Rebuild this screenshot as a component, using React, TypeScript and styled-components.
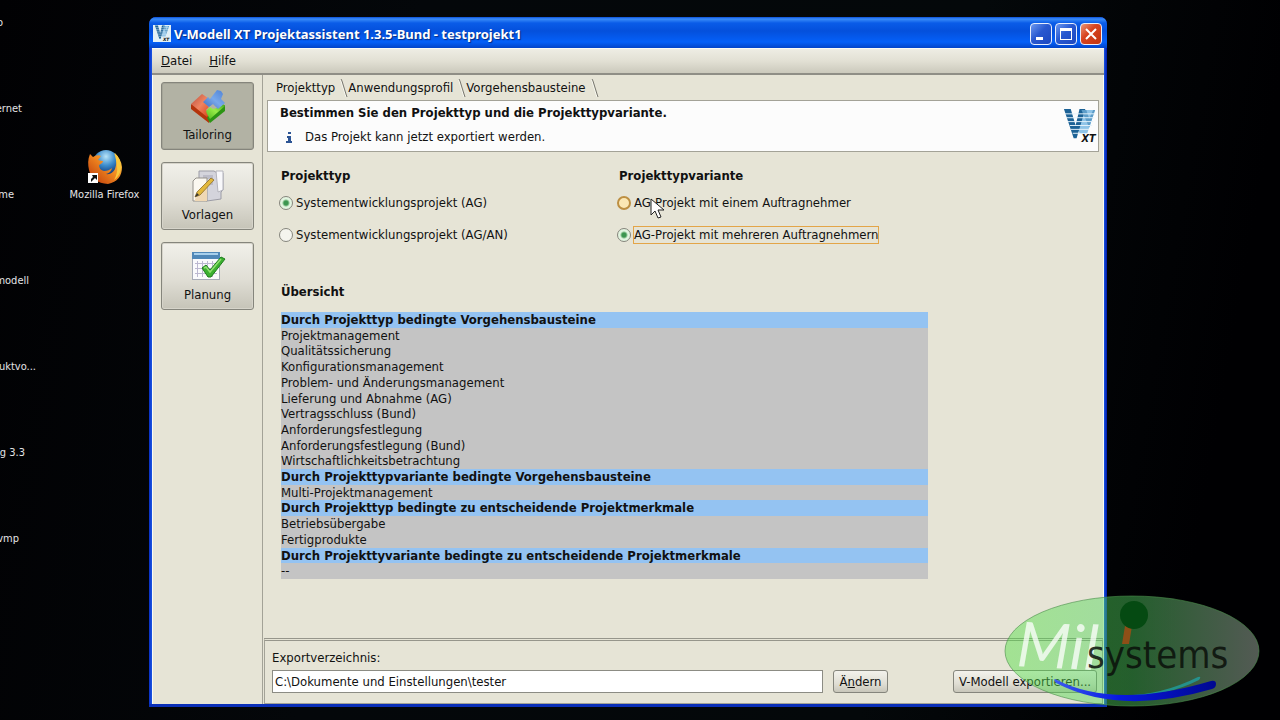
import React from 'react';
import styled, { createGlobalStyle } from 'styled-components';

const UI_FONT = '"DejaVu Sans Condensed", "DejaVu Sans", "Noto Sans", sans-serif';
const BG = '#e6e4d6';
const LINE = '#a3a297';

const GlobalStyle = createGlobalStyle`
  *, *::before, *::after { box-sizing: border-box; }
  body { margin: 0; background: #020305; font-family: ${UI_FONT}; font-size: 13px; color: #111; }
  button, input { font: inherit; color: inherit; }
  h1, h2, p, ul { margin: 0; padding: 0; }
`;

const Desktop = styled.div`
  position: relative;
  display: grid;
  grid-template-columns: 149px minmax(0, 1fr) 173px;
  min-height: 100vh;
  overflow: hidden;
  background: linear-gradient(100deg, #010103 0%, #04070a 30%, #04080a 70%, #000002 92%);
`;

const Shortcuts = styled.div`
  display: grid;
  grid-template-columns: 60px 89px;
  grid-template-rows: 30px;
  grid-auto-rows: 86px;
  align-items: end;
  font-size: 11px;
  line-height: 14px;
  color: #e4e4e6;
`;

const CutLabel = styled.span<{ $width: number }>`
  grid-column: 1;
  display: flex;
  justify-content: flex-end;
  width: ${p => p.$width}px;
  white-space: nowrap;
`;

const Shortcut = styled.div`
  grid-column: 2;
  grid-row: 3;
  display: flex;
  flex-direction: column;
  align-items: center;
  gap: 3px;
  white-space: nowrap;
`;

const Window = styled.section`
  display: flex;
  flex-direction: column;
  margin: 17px 0 13px;
  padding: 0 3px 3px;
  border-radius: 7px 7px 0 0;
  background: linear-gradient(90deg, #0a2fc4 0, #1a56e4 3px, #1a56e4 calc(100% - 3px), #0018a8 100%);
  box-shadow: inset 0 -3px 0 #0a2fb8;
  overflow: hidden;
`;

const TitleBar = styled.header`
  display: flex;
  align-items: center;
  gap: 3px;
  height: 31px;
  margin: 0 -3px;
  padding: 2px 5px 0 4px;
  background: linear-gradient(#0a4fd8 0, #3a8cf8 2px, #0a5ce8 6px, #0450dc 14px, #0460f8 25px, #0244c8 31px);
`;

const WindowIcon = styled.span`
  display: flex;
  width: 18px;
  height: 17px;
  padding: 0 1px;
  background: #e2f0f6;
`;

const TitleText = styled.h1`
  flex: 1;
  font-family: "Noto Sans", sans-serif;
  font-size: 13px;
  font-weight: 700;
  line-height: 20px;
  color: #fff;
  text-shadow: 1px 1px 1px #062a80;
  white-space: nowrap;
`;

const CaptionButton = styled.button<{ $close?: boolean }>`
  width: 22px;
  height: 22px;
  padding: 0;
  border: 1px solid #e8eefc;
  border-radius: 4px;
  background: ${p => p.$close
    ? 'linear-gradient(135deg, #ec9878, #d84420 40%, #c03410)'
    : 'linear-gradient(135deg, #6c98f0, #2858d0 45%, #1c48c0)'};
  svg { display: block; }
`;

const MenuBar = styled.nav`
  display: flex;
  gap: 17px;
  height: 27px;
  padding: 0 9px;
  border-top: 1px solid #fbfbf4;
  border-bottom: 2px solid #8f8e86;
  background: linear-gradient(#eeede4, #e2e0d4 50%, #cbc9bc);
`;

const MenuItem = styled.button`
  padding: 0;
  border: 0;
  background: none;
  line-height: 24px;
`;

const Body = styled.div`
  display: flex;
  flex: 1;
  background: ${BG};
  border-left: 1px solid #fbfbf4;
  border-right: 1px solid #fbfbf4;
`;

const Sidebar = styled.nav`
  display: flex;
  flex-direction: column;
  gap: 12px;
  width: 110px;
  padding: 7px 8px;
  border-right: 1px solid ${LINE};
`;

const SideButton = styled.button<{ $active?: boolean }>`
  display: flex;
  flex-direction: column;
  align-items: center;
  height: 68px;
  padding: 5px 0 0;
  border: 1px solid #85857c;
  border-radius: 3px;
  line-height: 20px;
  background: ${p => (p.$active ? '#b2b2a4' : 'linear-gradient(#f1f0ea, #e0ded5 55%, #c6c4b8)')};
  box-shadow: inset 0 0 0 1px ${p => (p.$active ? '#a5a598' : '#d6d4ca')};
`;

const Main = styled.main`
  display: flex;
  flex-direction: column;
  flex: 1;
  min-width: 0;
  margin-left: 1px;
`;

const Tabs = styled.div`
  display: flex;
  align-items: flex-end;
  height: 25px;
  padding: 0 0 2px 12px;
`;

const Tab = styled.button`
  display: flex;
  align-items: center;
  padding: 0;
  border: 0;
  background: none;
  line-height: 20px;
  white-space: nowrap;
  svg { margin-left: 5px; }
`;

const Banner = styled.div`
  display: flex;
  justify-content: space-between;
  height: 52px;
  margin: 0 4px 0 3px;
  padding: 2px 1px 0 12px;
  border: 1px solid ${LINE};
  background: #fcfcfc;
`;

const BannerLogo = styled.span`
  padding-top: 5px;
`;

const Heading = styled.h2`
  font-size: 13px;
  font-weight: 700;
  line-height: 20px;
`;

const Info = styled.p`
  display: flex;
  gap: 13px;
  padding: 4px 0 0 6px;
  line-height: 20px;
`;

const Content = styled.div`
  flex: 1;
  padding: 14px 15px 20px;
`;

const Choices = styled.div`
  display: grid;
  grid-template-columns: 338px minmax(0, 1fr);
`;

const Group = styled.fieldset`
  margin: 0;
  padding: 0;
  border: 0;
  min-width: 0;
`;

const Legend = styled.legend`
  padding: 0 0 7px 2px;
  font-weight: 700;
  line-height: 20px;
`;

const Choice = styled.label`
  position: relative;
  display: flex;
  align-items: center;
  gap: 2px;
  height: 20px;
  margin-bottom: 12px;
  white-space: nowrap;
`;

const Radio = styled.input<{ $hover?: boolean }>`
  appearance: none;
  width: 14px;
  height: 14px;
  margin: 0;
  border: ${p => (p.$hover ? '2px solid #bd8f42' : '1px solid #85857c')};
  border-radius: 50%;
  background: ${p => (p.$hover ? '#fbe7b4' : '#f4f4ee')};
  &:checked { background: radial-gradient(circle, #3c9650 0 2px, #8cc494 3px, #e2f4e0 4px); }
`;

const ChoiceText = styled.span<{ $focus?: boolean }>`
  border: 1px solid ${p => (p.$focus ? '#e3a548' : 'transparent')};
  line-height: 16px;
`;

const Pointer = styled.svg`
  position: absolute;
  left: 33px;
  top: 5px;
`;

const OverviewHeading = styled(Heading)`
  padding: 25px 0 10px 2px;
`;

const Overview = styled.ul`
  display: grid;
  grid-auto-rows: 1fr;
  width: 100%;
  max-width: 647px;
  height: 267px;
  margin-left: 2px;
  background: #c4c4c4;
  list-style: none;
`;

const OverviewRow = styled.li<{ $head?: boolean }>`
  line-height: 15px;
  white-space: nowrap;
  font-weight: ${p => (p.$head ? 700 : 400)};
  background: ${p => (p.$head ? '#94c3f2' : 'transparent')};
`;

const Footer = styled.form`
  padding: 7px 5px 10px 7px;
  border: 1px solid ${LINE};
  border-top: 3px double #96958b;
`;

const FooterLabel = styled.label`
  display: block;
  line-height: 20px;
  margin-bottom: 2px;
`;

const FooterRow = styled.div`
  display: flex;
  gap: 10px;
`;

const PathField = styled.input`
  flex: 1;
  min-width: 0;
  height: 23px;
  padding: 0 2px;
  border: 1px solid #8c8c84;
  background: #fff;
`;

const PushButton = styled.button<{ $apart?: boolean }>`
  height: 23px;
  padding: 0;
  width: ${p => (p.$apart ? 144 : 55)}px;
  margin-left: ${p => (p.$apart ? 55 : 0)}px;
  border: 1px solid #85857c;
  border-radius: 3px;
  background: linear-gradient(#f3f2ec, #e0ded4 60%, #c8c6ba);
  white-space: nowrap;
`;

const Brand = styled.svg`
  position: absolute;
  right: 20px;
  bottom: 12px;
  pointer-events: none;
`;

const overview: { head: string; items: string[] }[] = [
  {
    head: 'Durch Projekttyp bedingte Vorgehensbausteine',
    items: [
      'Projektmanagement', 'Qualitätssicherung', 'Konfigurationsmanagement',
      'Problem- und Änderungsmanagement', 'Lieferung und Abnahme (AG)', 'Vertragsschluss (Bund)',
      'Anforderungsfestlegung', 'Anforderungsfestlegung (Bund)', 'Wirtschaftlichkeitsbetrachtung',
    ],
  },
  { head: 'Durch Projekttypvariante bedingte Vorgehensbausteine', items: ['Multi-Projektmanagement'] },
  { head: 'Durch Projekttyp bedingte zu entscheidende Projektmerkmale', items: ['Betriebsübergabe', 'Fertigprodukte'] },
  { head: 'Durch Projekttyvariante bedingte zu entscheidende Projektmerkmale', items: ['--'] },
];

const cutLabels: [string, number][] = [
  ['o', 3], ['ernet', 22], ['me', 14], ['modell', 29], ['uktvo...', 36], ['g 3.3', 25], ['vmp', 19],
];

const FirefoxIcon = () => (
  <svg width="36" height="36" viewBox="0 0 36 36" aria-hidden="true">
    <defs>
      <radialGradient id="globe" cx=".5" cy=".25" r=".7">
        <stop offset="0" stopColor="#b8e4f8" /><stop offset=".5" stopColor="#3c8ccc" /><stop offset="1" stopColor="#0c3478" />
      </radialGradient>
      <linearGradient id="fur" x1="1" y1="0" x2="0" y2="1">
        <stop offset="0" stopColor="#f8d850" /><stop offset=".45" stopColor="#f08820" /><stop offset="1" stopColor="#b83008" />
      </linearGradient>
    </defs>
    <circle cx="19" cy="14" r="13" fill="url(#globe)" />
    <path d="M3 5l3 3q4-3 8-1l-3 4q3 1 5 1 0 2-4 4 0 5 5 6 5 0 8-3-1 5-6 6 6 1 9-5 3-7-1-16 7 5 8 14 0 14-14 17Q5 34 2 21 0 12 3 5z" fill="url(#fur)" />
    <path d="M28 4q6 6 6 15-1 8-7 12 4-7 3-14-1-7-2-13z" fill="#fac83c" />
    <rect x="1" y="24" width="10" height="10" fill="#fff" />
    <path d="M5 26h5v5l-2-2-4 4v-3l2-2z" fill="#111" />
  </svg>
);

const StripedV = ({ size }: { size: number }) => (
  <svg width={size} height={size} viewBox="0 0 34 36" aria-hidden="true">
    <path d="M18 2h15l-8 24h-8l-3-9z" fill="#8fc4e8" />
    <path d="M1 1h7l5 17 4-17h6l-9 30h-3z" fill="#1c6296" />
    <path d="M19 2h5l3 9 4-9h2l-6 18z" fill="#5c9cc8" />
    <path d="M2 6h31M3 10h29M5 14h26M7 18h23M8 22h19M10 26h7" stroke="#e4f2fa" strokeWidth="1" />
    <text x="19" y="35" fontFamily="DejaVu Sans" fontWeight="700" fontStyle="italic" fontSize="10" fill="#111">XT</text>
  </svg>
);

const TailoringIcon = () => (
  <svg width="38" height="37" viewBox="-1 -1 38 37" aria-hidden="true">
    <defs>
      <linearGradient id="red" x1="0" y1="0" x2="1" y2="1"><stop offset="0" stopColor="#b85040" /><stop offset=".5" stopColor="#f08460" /><stop offset="1" stopColor="#d84018" /></linearGradient>
      <linearGradient id="blue" x1="1" y1="0" x2="0" y2="1"><stop offset="0" stopColor="#4c80d4" /><stop offset=".5" stopColor="#78a8ec" /><stop offset="1" stopColor="#3c68b8" /></linearGradient>
      <linearGradient id="green" x1="1" y1="0" x2="0" y2="1"><stop offset="0" stopColor="#38a01c" /><stop offset=".5" stopColor="#98ec48" /><stop offset="1" stopColor="#50b820" /></linearGradient>
    </defs>
    <path d="M1 15v5l18 14 2-7-3-3z" fill="#b4340c" />
    <path d="M1 15L12 5l6 4-4 4 5 5-3 3 4 3-3 4z" fill="url(#red)" />
    <path d="M20 25l-3 4 3 5L35 22v-6z" fill="#2c9414" />
    <path d="M16 22l4-4 3 2 4-1 5-5 3 3-15 13-3-5z" fill="url(#green)" />
    <path d="M13 13l5-5 2 2 7-9 4 1 2 3-2 5 4 4-7 6-5-5-4 3z" fill="url(#blue)" />
  </svg>
);

const TemplatesIcon = () => (
  <svg width="38" height="37" viewBox="0 0 38 37" aria-hidden="true">
    <path d="M10 3h15l3 2h6v17l-2 2v7l-14 2-8-3z" fill="#d4d4dc" stroke="#9c9ca6" />
    <path d="M27 3h7v19l-5 2z" fill="#f8f8fb" stroke="#b4b4bc" />
    <path d="M14 7h10v4H14zM14 14h10v3H14z" fill="#bcbcc8" />
    <path d="M4 13l3-3h11v23H4z" fill="#fbf8f0" stroke="#96928c" />
    <path d="M6 31l12-15v17H6z" fill="#f0d8b4" />
    <path d="M6 29l2-5L22 10l3 2L11 27z" fill="#e2b83c" stroke="#8c6c28" strokeWidth=".8" />
    <path d="M6 29l2-4 2 2z" fill="#333" />
  </svg>
);

const PlanningIcon = () => (
  <svg width="38" height="37" viewBox="0 0 38 37" aria-hidden="true">
    <rect x="3.500" y="4.500" width="27" height="27" fill="#fafafc" stroke="#a8acb8" />
    <rect x="3" y="4" width="28" height="7" fill="#5088b8" />
    <path d="M5 6h24" stroke="#a8d0ec" strokeWidth="2" />
    <path d="M6 15.500h22M6 20.500h22M6 25.500h22M8.500 13v16M13.500 13v16M18.500 13v16M23.500 13v16" stroke="#bcb8d0" />
    <path d="M13 20l4-3 4 5L32 9l4 2-14 18h-3z" fill="#3cb030" stroke="#1c7c1c" />
    <path d="M15 20l2-1 4 5L32 11" fill="none" stroke="#90e070" strokeWidth="1.500" />
  </svg>
);

const Divider = () => (
  <svg width="8" height="20" viewBox="0 0 8 20" aria-hidden="true">
    <path d="M1 1l1 2 4 13 1 3" fill="none" stroke="#f8f8f0" transform="translate(-1 0)" />
    <path d="M1 1l1 2 4 13 1 3" fill="none" stroke="#77766e" />
  </svg>
);

const BrandMark = () => (
  <Brand width="256" height="114" viewBox="0 0 256 114" role="img" aria-label="Mil systems">
    <defs>
      <linearGradient id="oval" x1="0" x2="1">
        <stop offset="0" stopColor="#50e040" /><stop offset=".5" stopColor="#50d060" /><stop offset="1" stopColor="#b8c8b8" />
      </linearGradient>
      <linearGradient id="swoosh" x1="0" x2="1">
        <stop offset="0" stopColor="#3c5cf0" /><stop offset=".4" stopColor="#0818e0" /><stop offset="1" stopColor="#000890" />
      </linearGradient>
    </defs>
    <ellipse cx="128" cy="57" rx="127" ry="55" fill="url(#oval)" fillOpacity=".45" stroke="#4a8c4a" strokeOpacity=".6" />
    <text x="12" y="72" fontFamily="Lato, sans-serif" fontStyle="italic" fontSize="62" transform="rotate(3 12 72)" fill="#fff" fillOpacity=".75">Mil</text>
    <path d="M121 32h7l-3 18h-7z" fill="#a04c14" fillOpacity=".85" />
    <circle cx="130" cy="21" r="14" fill="#054a12" />
    <path d="M62 91Q130 115 194 83q4-1 1 3Q134 116 62 91z" fill="#18b4c0" fillOpacity=".6" />
    <path d="M51 85Q110 116 207 87q5-1 5 3t-4 5Q116 122 52 89q-3-3-1-4z" fill="url(#swoosh)" />
    <text x="83" y="74" fontFamily="DejaVu Sans Condensed, DejaVu Sans, sans-serif" fontSize="38" fill="#0a0f0a" fillOpacity=".85">systems</text>
  </Brand>
);

export default function App() {
  return (
    <Desktop>
      <GlobalStyle />
      <Shortcuts>
        {cutLabels.map(([text, width]) => <CutLabel key={text} $width={width}>{text}</CutLabel>)}
        <Shortcut><FirefoxIcon /><span>Mozilla Firefox</span></Shortcut>
      </Shortcuts>
      <Window>
        <TitleBar>
          <WindowIcon><StripedV size={16} /></WindowIcon>
          <TitleText>V-Modell XT Projektassistent 1.3.5-Bund - testprojekt1</TitleText>
          <CaptionButton aria-label="Minimieren">
            <svg width="20" height="20"><path d="M5 14.500h7" stroke="#fff" strokeWidth="3" /></svg>
          </CaptionButton>
          <CaptionButton aria-label="Maximieren">
            <svg width="20" height="20"><path d="M4 5.500h12" stroke="#fff" strokeWidth="3" /><rect x="4.500" y="4.500" width="11" height="11" fill="none" stroke="#fff" /></svg>
          </CaptionButton>
          <CaptionButton $close aria-label="Schließen">
            <svg width="20" height="20"><path d="M5 5l10 10M15 5L5 15" stroke="#fff" strokeWidth="2" /></svg>
          </CaptionButton>
        </TitleBar>
        <MenuBar>
          <MenuItem><u>D</u>atei</MenuItem>
          <MenuItem><u>H</u>ilfe</MenuItem>
        </MenuBar>
        <Body>
          <Sidebar>
            <SideButton $active><TailoringIcon />Tailoring</SideButton>
            <SideButton><TemplatesIcon />Vorlagen</SideButton>
            <SideButton><PlanningIcon />Planung</SideButton>
          </Sidebar>
          <Main>
            <Tabs role="tablist">
              {['Projekttyp', 'Anwendungsprofil', 'Vorgehensbausteine'].map((name, i) => (
                <Tab key={name} role="tab" aria-selected={i === 0}>{name}<Divider /></Tab>
              ))}
            </Tabs>
            <Banner>
              <div>
                <Heading>Bestimmen Sie den Projekttyp und die Projekttypvariante.</Heading>
                <Info>
                  <svg width="6" height="20" aria-hidden="true"><path d="M2 5h3v2H2zM1 9h4v5h1v2H0v-2h2v-3H1z" fill="#2c5494" /></svg>
                  Das Projekt kann jetzt exportiert werden.
                </Info>
              </div>
              <BannerLogo><StripedV size={35} /></BannerLogo>
            </Banner>
            <Content>
              <Choices>
                <Group>
                  <Legend>Projekttyp</Legend>
                  <Choice><Radio type="radio" name="typ" defaultChecked /><ChoiceText>Systementwicklungsprojekt (AG)</ChoiceText></Choice>
                  <Choice><Radio type="radio" name="typ" /><ChoiceText>Systementwicklungsprojekt (AG/AN)</ChoiceText></Choice>
                </Group>
                <Group>
                  <Legend>Projekttypvariante</Legend>
                  <Choice>
                    <Radio type="radio" name="variante" $hover /><ChoiceText>AG-Projekt mit einem Auftragnehmer</ChoiceText>
                    <Pointer width="15" height="23" viewBox="0 0 15 23" aria-hidden="true">
                      <path d="M1 1v16l4-4 3 7 3-1-3-7h6z" fill="#fff" stroke="#222" />
                    </Pointer>
                  </Choice>
                  <Choice><Radio type="radio" name="variante" defaultChecked /><ChoiceText $focus>AG-Projekt mit mehreren Auftragnehmern</ChoiceText></Choice>
                </Group>
              </Choices>
              <OverviewHeading>Übersicht</OverviewHeading>
              <Overview>
                {overview.map(section => (
                  <React.Fragment key={section.head}>
                    <OverviewRow $head>{section.head}</OverviewRow>
                    {section.items.map(item => <OverviewRow key={item}>{item}</OverviewRow>)}
                  </React.Fragment>
                ))}
              </Overview>
            </Content>
            <Footer onSubmit={e => e.preventDefault()}>
              <FooterLabel htmlFor="export-path">Exportverzeichnis:</FooterLabel>
              <FooterRow>
                <PathField id="export-path" defaultValue="C:\Dokumente und Einstellungen\tester" />
                <PushButton type="button">Ä<u>n</u>dern</PushButton>
                <PushButton type="submit" $apart>V-Modell exportieren...</PushButton>
              </FooterRow>
            </Footer>
          </Main>
        </Body>
      </Window>
      <BrandMark />
    </Desktop>
  );
}
